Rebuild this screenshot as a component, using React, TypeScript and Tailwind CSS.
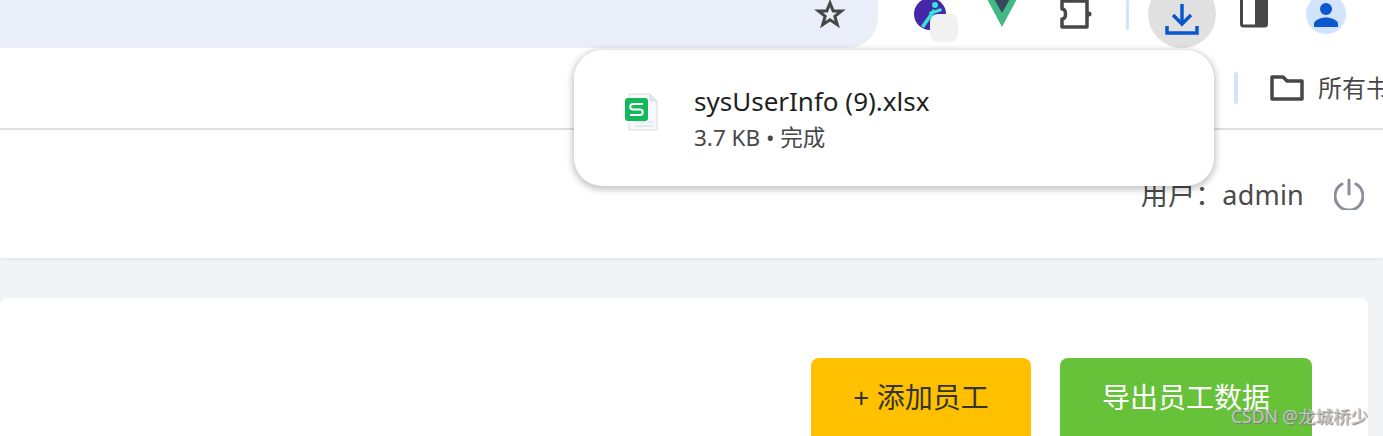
const font = '[font-family:"Noto_Sans","Noto_Sans_CJK_SC",sans-serif]';

function Toolbar() {
  return (
    <div className="flex h-12 items-start overflow-hidden bg-white">
      <div className="flex h-12 w-[878px] shrink-0 items-center justify-end rounded-br-[30px] bg-[#eaeef8] pr-[32px]">
        <svg className="mb-[20px] h-8 w-8" viewBox="0 0 32 32" fill="none" stroke="#474747" strokeWidth="3" strokeLinejoin="miter">
          <path d="M16 5l3.2 8h8.3l-6.700 5.300 2.500 8.400L16 21.800l-7.300 4.900 2.500-8.400L4.500 13h8.300z" />
        </svg>
      </div>
      <div className="relative ml-[36px] mt-[-2px] h-8 w-8 shrink-0 rounded-full bg-[#4527a8]">
        <svg className="h-8 w-8" viewBox="0 0 32 32">
          <path d="M7 28L19 11l3 2L10 30z" fill="#2ee8d8" />
          <path d="M15 14l12-4 1 3-12 4z" fill="#2ee8d8" />
          <circle cx="21" cy="7" r="3" fill="#2ee8d8" />
        </svg>
        <div className="absolute left-[16px] top-[16px] h-[28px] w-[28px] rounded-lg bg-[#f1f1f1]" />
      </div>
      <svg className="ml-[40px] mt-[-3px] h-[30px] w-8 shrink-0" viewBox="0 0 32 30">
        <path d="M0 0h32L16 30z" fill="#42b883" />
        <path d="M7 0h18L16 16z" fill="#35495e" />
      </svg>
      <svg className="ml-[42px] mt-[-2px] h-8 w-8 shrink-0" viewBox="0 0 32 32" fill="none" stroke="#474747" strokeWidth="3.500" strokeLinejoin="round">
        <path d="M2 3h25v26H2v-8c2.500 0 3.500-2 3.500-5S4.500 11 2 11z" />
        <circle cx="29" cy="16" r="2.500" fill="#474747" stroke="none" />
      </svg>
      <div className="ml-[34px] h-[30px] w-[3px] shrink-0 rounded-full bg-[#d3e3fd]" />
      <div className="relative ml-[19px] mt-[-20px] flex h-[68px] w-[68px] shrink-0 items-center justify-center rounded-full bg-[#e0e0e0]">
        <svg className="mt-[10px] h-[36px] w-[36px]" viewBox="0 0 36 36" fill="none" stroke="#0b57d0" strokeWidth="3.500">
          <path d="M18 3v19M9 14l9 9 9-9M3 25v7h30v-7" />
        </svg>
      </div>
      <svg className="ml-[24px] mt-[-2px] h-[30px] w-[28px] shrink-0" viewBox="0 0 28 30">
        <rect x="1.500" y="0" width="25" height="28" rx="2" fill="none" stroke="#474747" strokeWidth="3" />
        <rect x="15" y="0" width="12" height="28" fill="#474747" />
      </svg>
      <div className="ml-[38px] mt-[-6px] flex h-[40px] w-[40px] shrink-0 items-center justify-center rounded-full bg-[#d3e3fd]">
        <svg className="mt-[4px] h-[30px] w-[30px]" viewBox="0 0 30 30" fill="#0b57d0">
          <circle cx="15" cy="8" r="6" />
          <path d="M3 26v-3c0-4 7-6.500 12-6.500S27 19 27 23v3z" />
        </svg>
      </div>
    </div>
  );
}

function BookmarksBar() {
  return (
    <div className="flex h-[82px] items-center overflow-hidden border-b-2 border-[#e1e1e1] bg-white pl-[1234px]">
      <div className="h-[32px] w-[4px] shrink-0 rounded-full bg-[#d3e3fd]" />
      <svg className="ml-[31px] h-[28px] w-[36px] shrink-0" viewBox="0 0 36 28" fill="none" stroke="#474747" strokeWidth="3.500" strokeLinejoin="round">
        <path d="M3 3h11l4 4h15v18H3z" />
      </svg>
      <span className="ml-[13px] whitespace-nowrap text-[24px] text-[#474747]">所有书签</span>
    </div>
  );
}

function Header() {
  return (
    <div className="flex h-[128px] items-center justify-end bg-white pr-[19px] shadow-[0_1px_4px_rgba(0,21,41,0.08)]">
      <span className="mt-[3px] text-[27px] tracking-[0.2px] text-[#4a4a4a]">用户：admin</span>
      <svg className="ml-[30px] h-[32px] w-[30px]" viewBox="0 0 30 32" fill="none" stroke="#8a8f9c" strokeWidth="3" strokeLinecap="round">
        <path d="M15 2v14M8 6a14 14 0 1 0 14 0" />
      </svg>
    </div>
  );
}

function DownloadPopup() {
  return (
    <div className="absolute left-[574px] top-[50px] flex h-[136px] w-[640px] items-center rounded-[28px] bg-white pl-[51px] shadow-[0_2px_6px_2px_rgba(0,0,0,0.22)]">
      <svg className="mb-[12px] h-[38px] w-[34px] shrink-0" viewBox="0 0 34 38">
        <path d="M4 1h21l7 7v29H4z" fill="#f7f8fb" stroke="#d9dbe2" />
        <path d="M25 1v7h7z" fill="#e6e8ee" stroke="#d9dbe2" />
        <path d="M10 29h10M10 33h18M23 29h6" stroke="#e6e8ee" strokeWidth="2" />
        <rect x="0" y="5" width="23" height="23" rx="3" fill="#12b95c" />
        <path d="M18 11H8a2.500 2.500 0 0 0 0 5.500h7a2.500 2.500 0 0 1 0 5.500H5" fill="none" stroke="#fff" strokeWidth="2" />
      </svg>
      <div className="ml-[35px] mt-[3px]">
        <div className="text-[26px] leading-[34px] text-[#1f1f1f]">sysUserInfo (9).xlsx</div>
        <div className="mt-[3px] text-[22.5px] leading-[34px] text-[#474747]">3.7 KB • 完成</div>
      </div>
    </div>
  );
}

export default function App() {
  return (
    <div className={`relative h-[436px] w-[1383px] overflow-hidden bg-[#f2f3f7] ${font}`}>
      <Toolbar />
      <BookmarksBar />
      <Header />
      <div className="mr-[15px] mt-[40px] flex h-[200px] justify-end gap-[29px] rounded-[8px] bg-white pr-[56px] pt-[60px]">
        <button className="flex h-[100px] w-[220px] justify-center rounded-[8px] bg-[#ffc000] pt-[18px] text-[28px] leading-[42px] text-[#333]">+ 添加员工</button>
        <button className="flex h-[100px] w-[252px] justify-center rounded-[8px] bg-[#67c23a] pt-[18px] text-[28px] leading-[42px] text-white">导出员工数据</button>
      </div>
      <DownloadPopup />
      <div className="absolute bottom-[8px] right-[15px] text-[17.5px] leading-[24px] text-[#c4c4c4] [text-shadow:1px_1px_1px_#777]">CSDN @龙城桥少</div>
    </div>
  );
}
